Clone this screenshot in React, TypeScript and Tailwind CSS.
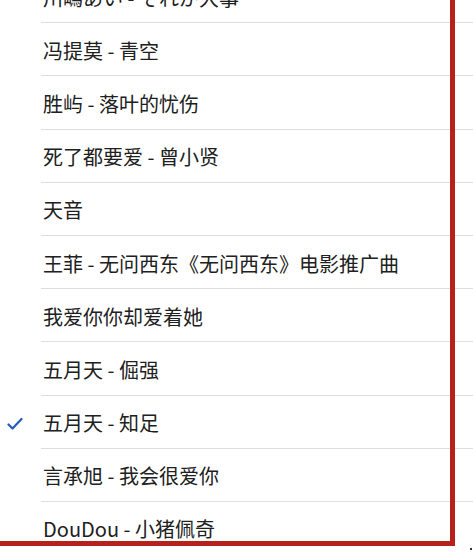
import React from "react";

const songs: { t: string; jp?: boolean; checked?: boolean }[] = [
  { t: "川嶋あい - それが大事", jp: true },
  { t: "冯提莫 - 青空" },
  { t: "胜屿 - 落叶的忧伤" },
  { t: "死了都要爱 - 曾小贤" },
  { t: "天音" },
  { t: "王菲 - 无问西东《无问西东》电影推广曲" },
  { t: "我爱你你却爱着她" },
  { t: "五月天 - 倔强" },
  { t: "五月天 - 知足", checked: true },
  { t: "言承旭 - 我会很爱你" },
  { t: "DouDou - 小猪佩奇" },
];

function Check() {
  return (
    <svg width="16" height="14" viewBox="0 0 16 14" fill="none">
      <path
        d="M1.5 7.5 L5.5 11.5 L14.5 2"
        stroke="#2559b8"
        strokeWidth="2.2"
        strokeLinecap="round"
        strokeLinejoin="round"
      />
    </svg>
  );
}

export default function App() {
  return (
    <div className="relative w-[473px] h-[552px] overflow-hidden bg-white">
      <div className="mt-[-30px] flex flex-col">
        {songs.map((s, i) => (
          <div key={i} className="relative h-[53.2px] flex items-center pl-[43px]">
            {s.checked && (
              <div className="absolute left-[7px] top-[21px]">
                <Check />
              </div>
            )}
            <span
              className="text-[20px] leading-none text-[#202020] pt-[2px]"
              style={{
                fontFamily: s.jp
                  ? '"Noto Sans CJK JP", "Noto Sans CJK SC", sans-serif'
                  : '"Noto Sans CJK SC", "Noto Sans", sans-serif',
              }}
            >
              {s.t}
            </span>
            <div className="absolute left-[41px] right-0 bottom-0 h-px bg-[#dedede]" />
          </div>
        ))}
      </div>
      <div className="absolute left-[-20px] top-[-20px] w-[475px] h-[566px] border-r-[5px] border-b-[5px] border-[#b5221c] pointer-events-none" />
      <div className="absolute left-[470px] top-[548px] w-[2px] h-[2px] bg-[#333]" />
    </div>
  );
}
